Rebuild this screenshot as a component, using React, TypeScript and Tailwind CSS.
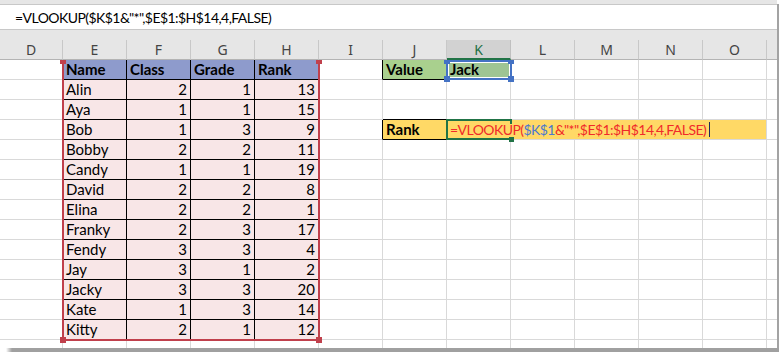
import React from "react";

const cols = ["D", "E", "F", "G", "H", "I", "J", "K", "L", "M", "N", "O"];

const data: [string, number, number, number][] = [
  ["Alin", 2, 1, 13],
  ["Aya", 1, 1, 15],
  ["Bob", 1, 3, 9],
  ["Bobby", 2, 2, 11],
  ["Candy", 1, 1, 19],
  ["David", 2, 2, 8],
  ["Elina", 2, 2, 1],
  ["Franky", 2, 3, 17],
  ["Fendy", 3, 3, 4],
  ["Jay", 3, 1, 2],
  ["Jacky", 3, 3, 20],
  ["Kate", 1, 3, 14],
  ["Kitty", 2, 1, 12],
];

const cellFont = { fontFamily: "Lato, 'Liberation Sans', sans-serif" };

function Blank({ first, extra = "" }: { first?: boolean; extra?: string }) {
  return (
    <div
      className={`${first ? "w-[63px]" : "w-[64px]"} h-[20px] shrink-0 border-r border-b border-[#d9d9d9] ${extra}`}
    />
  );
}

function TCell({
  text,
  right,
  head,
}: {
  text: string | number;
  right?: boolean;
  head?: boolean;
}) {
  return (
    <div
      className={`w-[64px] h-[20px] shrink-0 border-r border-b border-black flex items-end pb-[1px] text-[15px] leading-[17px] text-black ${
        head ? "bg-[#8e9bcc] font-bold pl-[3px]" : "bg-[#f8e6e7]"
      } ${right ? "justify-end pr-[3px]" : "pl-[3px]"}`}
    >
      {text}
    </div>
  );
}

function Handle({ cls }: { cls: string }) {
  return <div className={`absolute w-[6px] h-[6px] ${cls}`} />;
}

function Row({ r }: { r: number }) {
  const inTable = r >= 1 && r <= 14;
  const d = r >= 2 && r <= 14 ? data[r - 2] : null;
  return (
    <div className="flex h-[20px]">
      <Blank first />
      {inTable && r === 1 && (
        <>
          <TCell text="Name" head />
          <TCell text="Class" head />
          <TCell text="Grade" head />
          <TCell text="Rank" head />
        </>
      )}
      {d && (
        <>
          <TCell text={d[0]} />
          <TCell text={d[1]} right />
          <TCell text={d[2]} right />
          <TCell text={d[3]} right />
        </>
      )}
      {!inTable && (
        <>
          <Blank />
          <Blank />
          <Blank />
          <Blank />
        </>
      )}
      <Blank extra={r === 1 || r === 4 ? "border-r-black" : ""} />
      {r === 1 ? (
        <>
          <div className="w-[64px] h-[20px] shrink-0 border-r border-b border-black bg-[#a9d08e] font-bold text-[15px] leading-[17px] flex items-end pb-[1px] pl-[3px]">
            Value
          </div>
          <div className="w-[64px] h-[20px] shrink-0 border-r border-b border-[#d9d9d9] bg-[#9fc593] font-bold text-[15px] leading-[17px] flex items-end pb-[1px] pl-[3px]">
            Jack
          </div>
          <Blank />
          <Blank />
          <Blank />
          <Blank />
        </>
      ) : r === 4 ? (
        <>
          <div className="w-[64px] h-[20px] shrink-0 border-r border-b border-black bg-[#ffd966] font-bold text-[15px] leading-[17px] flex items-end pb-[1px] pl-[3px]">
            Rank
          </div>
          <div className="w-[320px] h-[20px] shrink-0 border-r border-b border-[#d9d9d9] bg-[#ffd966] text-[14px] tracking-[-0.55px] leading-[17px] flex items-end pb-[1px] pl-[3px] whitespace-nowrap">
            <span className="text-[#f02a2a]">=VLOOKUP(</span>
            <span className="text-[#4a78cf]">$K$1</span>
            <span className="text-[#f02a2a]">&amp;"*",$E$1:$H$14,4,FALSE)</span>
            <span className="inline-block w-[1px] h-[15px] bg-[#1f2a5a] ml-[3px] mb-[1px]" />
          </div>
        </>
      ) : (
        <>
          <Blank extra={r === 3 ? "border-b-black" : ""} />
          <Blank />
          <Blank />
          <Blank />
          <Blank />
          <Blank />
        </>
      )}
      <div className="w-[10px] h-[20px] shrink-0 bg-white border-b border-[#d9d9d9]" />
    </div>
  );
}

export default function App() {
  const rows = Array.from({ length: 15 }, (_, i) => i + 1);
  return (
    <div className="w-[779px] h-[352px] bg-white overflow-hidden flex flex-col" style={cellFont}>
      <div className="flex h-[348px]">
        <div className="w-[777px] flex flex-col">
          <div className="h-[5px] shrink-0 bg-[#e6e6e6] border-b border-[#c8c8c8]" />
          <div className="h-[24px] shrink-0 bg-white flex items-center pl-[15px] text-[14px] tracking-[-0.55px] text-black whitespace-nowrap">
            =VLOOKUP($K$1&amp;"*",$E$1:$H$14,4,FALSE)
          </div>
          <div className="h-[11px] shrink-0 bg-[#e6e6e6] border-t border-[#c8c8c8]" />
          <div
            className="flex h-[20px] shrink-0 bg-[#e6e6e6] text-[14px] text-[#444]"
            style={{ fontFamily: "'Noto Sans', 'Open Sans', sans-serif" }}
          >
            {cols.map((c, i) => (
              <div
                key={c}
                className={`${i === 0 ? "w-[63px]" : "w-[64px]"} h-[20px] shrink-0 flex items-center justify-center border-r ${
                  c === "K"
                    ? "bg-[#d2d2d2] border-[#c0c0c0] border-b-2 border-b-[#217346] text-[#216e43]"
                    : "border-[#c8c8c8] border-b border-b-[#b4b4b4]"
                }`}
              >
                {c}
              </div>
            ))}
            <div className="w-[10px] h-[20px] border-b border-[#b4b4b4]" />
          </div>
          <div className="relative flex-1 overflow-hidden">
            {rows.map((r) => (
              <Row key={r} r={r} />
            ))}

            {/* range highlight $E$1:$H$14 */}
            <div className="absolute left-[62px] top-0 w-[258px] h-[281px] border-l-2 border-r-2 border-b-2 border-[#c0404c]" />
            <Handle cls="left-[60px] top-[-2px] bg-[#c0404c]" />
            <Handle cls="left-[316px] top-[-2px] bg-[#c0404c]" />
            <Handle cls="left-[60px] top-[277px] bg-[#c0404c]" />
            <Handle cls="left-[316px] top-[277px] bg-[#c0404c]" />

            {/* reference highlight $K$1 */}
            <div className="absolute left-[446px] top-0 w-[66px] h-[20px] border-2 border-[#4472c4]">
              <div className="w-full h-full border border-white" />
            </div>
            <Handle cls="left-[444px] top-[-2px] bg-[#4472c4]" />
            <Handle cls="left-[508px] top-[-2px] bg-[#4472c4]" />
            <Handle cls="left-[444px] top-[16px] bg-[#4472c4]" />
            <Handle cls="left-[508px] top-[16px] bg-[#4472c4]" />

            {/* active cell K4, its right edge sits under the edited text */}
            <div className="absolute left-[446px] top-[59px] w-[66px] h-[21px] border-l-2 border-t-2 border-b-2 border-[#217346]" />
            <div className="absolute left-[510px] top-[59px] w-[2px] h-[5px] bg-[#217346]" />
            <div className="absolute left-[509px] top-[77px] w-[5px] h-[5px] bg-[#217346]" />
          </div>
        </div>
        <div className="w-[2px] bg-[#a3a3a3] mt-[4px]" />
      </div>
      <div className="flex h-[4px]">
        <div className="w-[6px] bg-white" />
        <div className="w-[6px] bg-gradient-to-r from-white to-[#a0a0a0]" />
        <div className="flex-1 bg-[#a0a0a0]" />
      </div>
    </div>
  );
}
